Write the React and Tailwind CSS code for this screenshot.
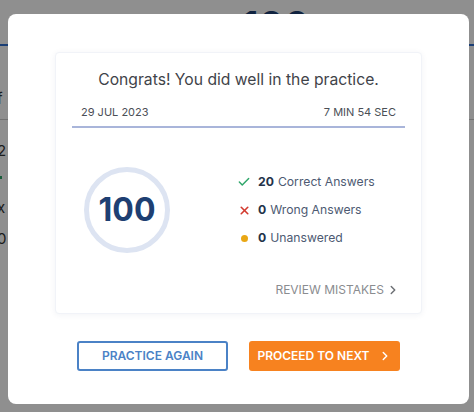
import { Check, X, ChevronRight } from 'lucide-react';

const stats = [
  { count: 20, label: 'Correct Answers', kind: 'correct' },
  { count: 0, label: 'Wrong Answers', kind: 'wrong' },
  { count: 0, label: 'Unanswered', kind: 'skipped' },
];

function StatIcon({ kind }) {
  if (kind === 'correct') return <Check size={14} strokeWidth={2.5} className="text-[#2fa66a]" />;
  if (kind === 'wrong') return <X size={13} strokeWidth={3} className="text-[#d23a2f]" />;
  return <span className="block w-[7px] h-[7px] rounded-full bg-[#e9a714]" />;
}

export default function App() {
  return (
    <div className="relative h-[412px] w-[474px] overflow-hidden bg-white" style={{ fontFamily: 'Inter, "Noto Sans", sans-serif' }}>
      {/* page behind the dialog */}
      <div className="flex flex-col">
        <div className="h-[44px] pl-[242px] text-[38px] font-bold leading-[50px] text-[#1e3f72]">100</div>
        <div className="h-[2px] bg-[#2f6fd0]" />
        <div className="flex flex-col pl-0 text-[15px] text-[#333]">
          <div className="-ml-[3px] mt-[42px]">f</div>
          <div className="h-px bg-[#ccc] mt-[8px]" />
          <div className="-ml-[3px] mt-[20px]">2</div>
          <div className="mt-[14px] h-[3px] w-[2px] bg-[#2fa66a]" />
          <div className="-ml-[3px] mt-[18px]">x</div>
          <div className="-ml-[3px] mt-[8px]">0</div>
        </div>
      </div>

      {/* overlay */}
      <div className="absolute inset-0 bg-black/[0.44]">
        <div className="ml-[8px] mt-[14px] h-[390px] w-[461px] rounded-[8px] bg-white pt-[38px]">
          <div className="mx-[47px] flex flex-col rounded-[4px] border border-[#f1f3f8] bg-white px-[16px] pt-[16px] pb-[15px] shadow-[0_1px_6px_rgba(30,50,100,0.06)]">
            <p className="text-center text-[15.7px] leading-[22px] text-[#3f4349]">Congrats! You did well in the practice.</p>
            <div className="mt-[13px] flex justify-between border-b-2 border-[#a9b5da] px-[9px] pb-[6px] text-[11px] leading-[16px] text-[#4b4f56]">
              <span>29 JUL 2023</span>
              <span>7 MIN 54 SEC</span>
            </div>
            <div className="mt-[39px] flex items-center">
              <div className="ml-[12px] flex h-[86px] w-[86px] items-center justify-center rounded-full border-[5px] border-[#dde4f2]">
                <span className="text-[32px] font-bold text-[#1e3f72]">100</span>
              </div>
              <div className="ml-[67px] flex flex-col gap-[10px]">
                {stats.map((s) => (
                  <div key={s.label} className="flex items-center text-[12.2px] leading-[18px]">
                    <span className="flex w-[14px] items-center justify-center">
                      <StatIcon kind={s.kind} />
                    </span>
                    <span className="ml-[7px] font-bold text-[#24324a]">{s.count}</span>
                    <span className="ml-[4px] text-[#4d5a72]">{s.label}</span>
                  </div>
                ))}
              </div>
            </div>
            <div className="mt-[29px] flex items-center justify-end pr-[5px] text-[12px] leading-[16px] text-[#8a8c90]">
              REVIEW MISTAKES
              <ChevronRight size={14} strokeWidth={2.5} className="ml-[2px] text-[#6d7075]" />
            </div>
          </div>
          <div className="mt-[27px] flex justify-center gap-[21px]">
            <button className="h-[30px] w-[151px] rounded-[3px] border-2 border-[#4b82c6] text-[12px] font-semibold text-[#4b82c6]">
              PRACTICE AGAIN
            </button>
            <button className="flex h-[30px] w-[151px] items-center justify-center rounded-[3px] bg-[#f7821f] text-[12px] font-semibold text-white">
              PROCEED TO NEXT
              <ChevronRight size={14} strokeWidth={2.5} className="ml-[8px]" />
            </button>
          </div>
        </div>
      </div>
    </div>
  );
}
